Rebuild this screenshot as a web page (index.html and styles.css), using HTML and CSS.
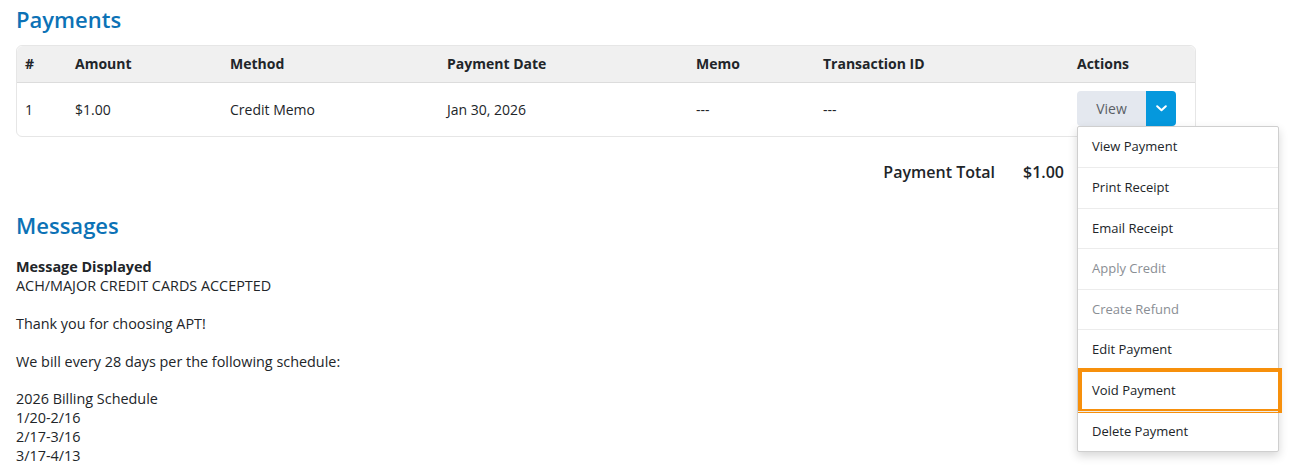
FILE: index.html
```html
<!DOCTYPE html>
<html lang="en">
<head>
<meta charset="utf-8">
<title>Payments</title>
<link rel="stylesheet" href="styles.css">
</head>
<body>
<div class="page">
  <h2 class="section-title">Payments</h2>
  <div class="table-wrap">
    <table class="pay-table">
      <colgroup>
        <col class="c-num"><col class="c-amt"><col class="c-method"><col class="c-date"><col class="c-memo"><col class="c-txn"><col class="c-act">
      </colgroup>
      <thead>
        <tr>
          <th>#</th><th>Amount</th><th>Method</th><th>Payment Date</th><th>Memo</th><th>Transaction ID</th><th>Actions</th>
        </tr>
      </thead>
      <tbody>
        <tr>
          <td>1</td><td>$1.00</td><td>Credit Memo</td><td>Jan 30, 2026</td><td>---</td><td>---</td>
          <td class="act-cell">
            <div class="btn-group">
              <button class="btn-view">View</button>
              <button class="btn-toggle" aria-label="More actions">
                <svg width="11" height="7" viewBox="0 0 11 7"><path d="M1.2 1.2 L5.5 5.3 L9.8 1.2" fill="none" stroke="#fff" stroke-width="2" stroke-linecap="round" stroke-linejoin="round"/></svg>
              </button>
              <ul class="menu">
                <li>View Payment</li>
                <li>Print Receipt</li>
                <li>Email Receipt</li>
                <li class="disabled">Apply Credit</li>
                <li class="disabled">Create Refund</li>
                <li>Edit Payment</li>
                <li class="highlight">Void Payment</li>
                <li>Delete Payment</li>
              </ul>
            </div>
          </td>
        </tr>
      </tbody>
    </table>
  </div>
  <div class="total-row">
    <span class="total-label">Payment Total</span>
    <span class="total-value">$1.00</span>
  </div>
  <h2 class="section-title messages-title">Messages</h2>
  <div class="messages">
    <div class="msg-head">Message Displayed</div>
    <div>ACH/MAJOR CREDIT CARDS ACCEPTED</div>
    <div class="blank"></div>
    <div>Thank you for choosing APT!</div>
    <div class="blank"></div>
    <div>We bill every 28 days per the following schedule:</div>
    <div class="blank"></div>
    <div>2026 Billing Schedule</div>
    <div>1/20-2/16</div>
    <div>2/17-3/16</div>
    <div>3/17-4/13</div>
  </div>
</div>
</body>
</html>
```
FILE: styles.css
```css
* { box-sizing: border-box; }
html, body { margin: 0; padding: 0; background: #fff; }
body {
  font-family: "Open Sans", "Liberation Sans", sans-serif;
  color: #212529;
  font-size: 14px;
  width: 1298px;
  height: 468px;
  overflow: hidden;
}
.page { padding: 4px 0 0 16px; }
.section-title {
  margin: 0;
  font-size: 22px;
  line-height: 30px;
  font-weight: 600;
  color: #0c72b6;
}
.table-wrap {
  margin-top: 11px;
  width: 1180px;
  border: 1px solid #e6e6e6;
  border-radius: 6px;
  overflow: visible;
}
.pay-table {
  width: 100%;
  border-collapse: separate;
  border-spacing: 0;
  table-layout: fixed;
}
.c-num { width: 50px; }
.c-amt { width: 155px; }
.c-method { width: 217px; }
.c-date { width: 249px; }
.c-memo { width: 127px; }
.c-txn { width: 254px; }
.c-act { width: auto; }
.pay-table th {
  background: #f0f0f0;
  text-align: left;
  font-weight: 700;
  font-size: 14px;
  height: 37px;
  padding: 0 0 1px 8px;
  border-bottom: 1px solid #dcdcdc;
}
.pay-table th:first-child { border-top-left-radius: 6px; }
.pay-table th:last-child { border-top-right-radius: 6px; }
.pay-table td {
  height: 53px;
  padding: 0 0 0 8px;
  vertical-align: middle;
}
.act-cell { position: relative; }
.btn-group {
  position: relative;
  display: inline-flex;
  height: 35px;
  margin-top: -3px;
}
.btn-view {
  width: 69px;
  height: 35px;
  border: 0;
  margin: 0;
  background: #e4e8ef;
  color: #5a5f66;
  font-family: inherit;
  font-size: 14px;
  border-radius: 4px 0 0 4px;
  padding: 0;
}
.btn-toggle {
  width: 30px;
  height: 35px;
  border: 0;
  margin: 0;
  padding: 0;
  background: #0598dd;
  border-radius: 0 4px 4px 0;
  display: flex;
  align-items: center;
  justify-content: center;
}
.menu {
  position: absolute;
  top: 35px;
  left: 0;
  width: 202px;
  margin: 0;
  padding: 0;
  list-style: none;
  background: #fff;
  border: 1px solid #cfcfcf;
  border-radius: 2px;
  box-shadow: 0 4px 10px rgba(0, 0, 0, 0.16);
  z-index: 10;
}
.menu li {
  position: relative;
  height: 40.6px;
  line-height: 38px;
  padding-left: 14px;
  font-size: 13px;
  color: #212529;
  border-top: 1px solid #ececec;
}
.menu li:first-child { border-top: 0; }
.menu li.disabled { color: #8a8e94; }
.menu li.highlight::after {
  content: "";
  position: absolute;
  left: 0;
  right: -4px;
  top: -3px;
  bottom: -2px;
  border: 4px solid #f7900c;
  pointer-events: none;
}
.total-row {
  width: 1180px;
  display: flex;
  justify-content: flex-end;
  align-items: center;
  gap: 28px;
  padding-right: 132px;
  height: 52px;
  margin-top: 9px;
  font-weight: 600;
  font-size: 16px;
}
.messages-title { margin-top: 12px; }
.messages {
  margin-top: 18px;
  font-size: 14.4px;
  line-height: 18.9px;
}
.msg-head { font-weight: 700; }
.blank { height: 18.9px; }
```
